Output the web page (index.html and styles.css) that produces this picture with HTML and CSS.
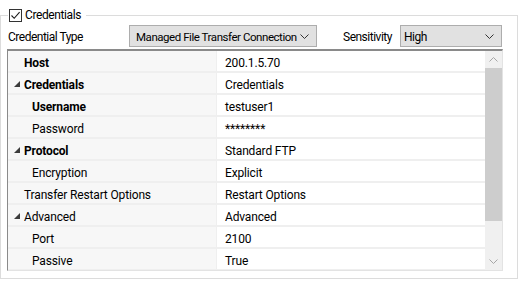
FILE: index.html
```html
<!DOCTYPE html>
<html>
<head>
<meta charset="utf-8">
<link rel="stylesheet" href="styles.css">
</head>
<body>
<div class="page">
  <fieldset class="group">
    <legend class="legend">
      <span class="check"><svg width="11" height="11" viewBox="0 0 11 11"><path d="M1.5 5.5 L4.2 8.3 L9.6 2.2" fill="none" stroke="#1a1a1a" stroke-width="1.1"/></svg></span>
      <span>Credentials</span>
    </legend>
    <div class="toolbar">
      <span class="lbl-type">Credential Type</span>
      <div class="combo combo-type"><span>Managed File Transfer Connection</span><svg class="chev" width="9" height="5" viewBox="0 0 9 5"><path d="M0.5 0.5 L4.5 4.5 L8.5 0.5" fill="none" stroke="#333" stroke-width="1"/></svg></div>
      <span class="lbl-sens">Sensitivity</span>
      <div class="combo combo-sens"><span>High</span><svg class="chev" width="9" height="5" viewBox="0 0 9 5"><path d="M0.5 0.5 L4.5 4.5 L8.5 0.5" fill="none" stroke="#333" stroke-width="1"/></svg></div>
    </div>
    <div class="grid">
      <div class="rows">
        <div class="row"><div class="lab l0 bold">Host</div><div class="val">200.1.5.70</div></div>
        <div class="row"><div class="lab lt bold"><span class="tri"><svg width="6" height="6" viewBox="0 0 6 6"><polygon points="6,0 6,6 0,6" fill="#3c3c3c"/></svg></span>Credentials</div><div class="val">Credentials</div></div>
        <div class="row"><div class="lab l1 bold">Username</div><div class="val">testuser1</div></div>
        <div class="row"><div class="lab l1">Password</div><div class="val">********</div></div>
        <div class="row"><div class="lab lt bold"><span class="tri"><svg width="6" height="6" viewBox="0 0 6 6"><polygon points="6,0 6,6 0,6" fill="#3c3c3c"/></svg></span>Protocol</div><div class="val">Standard FTP</div></div>
        <div class="row"><div class="lab l1">Encryption</div><div class="val">Explicit</div></div>
        <div class="row"><div class="lab l0">Transfer Restart Options</div><div class="val">Restart Options</div></div>
        <div class="row"><div class="lab lt"><span class="tri"><svg width="6" height="6" viewBox="0 0 6 6"><polygon points="6,0 6,6 0,6" fill="#3c3c3c"/></svg></span>Advanced</div><div class="val">Advanced</div></div>
        <div class="row"><div class="lab l1">Port</div><div class="val">2100</div></div>
        <div class="row"><div class="lab l1">Passive</div><div class="val">True</div></div>
      </div>
      <div class="scrollbar">
        <div class="sb-btn"><svg width="9" height="5" viewBox="0 0 9 5"><path d="M0.5 4.5 L4.5 0.5 L8.5 4.5" fill="none" stroke="#a6a6a6" stroke-width="1"/></svg></div>
        <div class="sb-thumb"></div>
        <div class="sb-track"></div>
        <div class="sb-btn"><svg width="9" height="5" viewBox="0 0 9 5"><path d="M0.5 0.5 L4.5 4.5 L8.5 0.5" fill="none" stroke="#a6a6a6" stroke-width="1"/></svg></div>
      </div>
    </div>
  </fieldset>
</div>
</body>
</html>
```
FILE: styles.css
```css
html, body {
  margin: 0;
  padding: 0;
}
body {
  width: 520px;
  height: 286px;
  overflow: hidden;
  background: #ffffff;
  font-family: Roboto, "Noto Sans", sans-serif;
  font-size: 12px;
  color: #000000;
}
.page {
  padding-top: 8px;
}
.group {
  margin: 0;
  padding: 0 0 7px 0;
  width: 518px;
  box-sizing: border-box;
  border: 1px solid #dcdcdc;
  min-width: 0;
}
.legend {
  margin-left: 7px;
  padding: 0 5px 0 1px;
  display: flex;
  align-items: center;
  height: 14px;
  line-height: 14px;
  letter-spacing: -0.4px;
}
.check {
  width: 13px;
  height: 13px;
  box-sizing: border-box;
  border: 1px solid #333333;
  background: #ffffff;
  display: flex;
  align-items: center;
  justify-content: center;
  margin-right: 3px;
}
.toolbar {
  display: flex;
  align-items: center;
  height: 22px;
  margin: 3px 0 0 7px;
  white-space: nowrap;
  letter-spacing: -0.5px;
}
.lbl-type {
  width: 121px;
  padding-top: 2px;
}
.lbl-sens {
  margin-left: 26px;
  width: 57px;
  padding-top: 2px;
}
.combo {
  height: 22px;
  box-sizing: border-box;
  border: 1px solid #adadad;
  background: #e1e1e1;
  display: flex;
  align-items: center;
  justify-content: space-between;
  padding: 0 7px 0 6px;
  white-space: nowrap;
}
.combo span {
  padding-top: 1px;
}
.combo-type {
  width: 188px;
  font-size: 11.5px;
  letter-spacing: -0.45px;
}
.combo-sens {
  width: 102px;
  padding-left: 3px;
}
.grid {
  margin: 2px 0 0 6px;
  width: 496px;
  height: 222px;
  box-sizing: border-box;
  border-style: solid;
  border-width: 2px 1px 1px 1px;
  border-color: #8a8a8a #e3e3e3 #e3e3e3 #8a8a8a;
  display: flex;
  overflow: hidden;
  letter-spacing: -0.15px;
}
.rows {
  flex: 1;
  overflow: hidden;
}
.row {
  display: flex;
  height: 22px;
  box-sizing: border-box;
  border-bottom: 2px solid #efefef;
}
.lab {
  width: 209px;
  flex: none;
  background: #f7f7f7;
  border-right: 1px solid #efefef;
  display: flex;
  align-items: center;
  white-space: nowrap;
  box-sizing: border-box;
  padding-top: 3px;
}
.l0 {
  padding-left: 16px;
}
.l1 {
  padding-left: 24px;
}
.lt {
  padding-left: 6px;
}
.tri {
  width: 10px;
  display: flex;
  align-items: center;
  margin-top: -1px;
}
.bold {
  font-weight: bold;
}
.val {
  flex: 1;
  padding-left: 8px;
  padding-top: 3px;
  display: flex;
  align-items: center;
  white-space: nowrap;
}
.scrollbar {
  width: 17px;
  flex: none;
  background: #f0f0f0;
  display: flex;
  flex-direction: column;
}
.sb-btn {
  height: 17px;
  display: flex;
  align-items: center;
  justify-content: center;
}
.sb-thumb {
  height: 153px;
  background: #cdcdcd;
}
.sb-track {
  flex: 1;
}
```
